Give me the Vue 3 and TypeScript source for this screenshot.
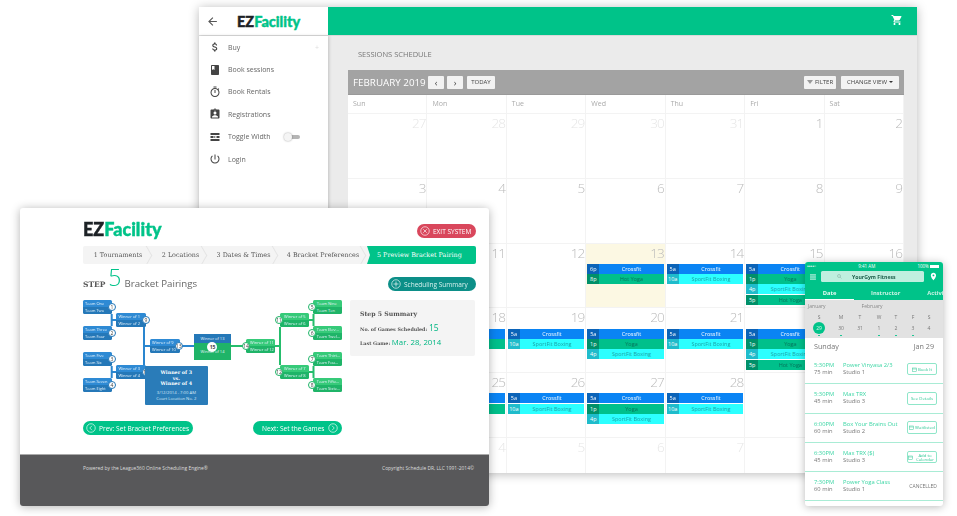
<script setup lang="ts">
type EventKind = 'blue' | 'green' | 'cyan'

interface CalEvent {
  time: string
  label: string
  kind: EventKind
}

interface CalDay {
  num: number
  muted?: boolean
  today?: boolean
  events?: CalEvent[]
}

const crossfit = (time: string): CalEvent => ({ time, label: 'Crossfit', kind: 'blue' })
const boxing = (time: string): CalEvent => ({ time, label: 'SportFit Boxing', kind: 'cyan' })
const yoga = (time: string): CalEvent => ({ time, label: 'Yoga', kind: 'green' })
const hotYoga = (time: string): CalEvent => ({ time, label: 'Hot Yoga', kind: 'green' })

const fullDay = [crossfit('5a'), yoga('1p'), boxing('4p'), hotYoga('5p')]
const shortDay = [crossfit('5a'), boxing('10a')]
const midDay = [crossfit('5a'), yoga('1p'), boxing('4p')]

const weekdays = ['Sun', 'Mon', 'Tue', 'Wed', 'Thu', 'Fri', 'Sat']

const days: CalDay[] = [
  { num: 27, muted: true }, { num: 28, muted: true }, { num: 29, muted: true }, { num: 30, muted: true },
  { num: 31, muted: true }, { num: 1 }, { num: 2 },
  { num: 3 }, { num: 4 }, { num: 5 }, { num: 6 }, { num: 7 }, { num: 8 }, { num: 9 },
  { num: 10 }, { num: 11 }, { num: 12 },
  { num: 13, today: true, events: [crossfit('6p'), hotYoga('8p')] },
  { num: 14, events: shortDay },
  { num: 15, events: fullDay },
  { num: 16 },
  { num: 17 }, { num: 18, events: [crossfit('5a'), yoga('1p')] }, { num: 19, events: shortDay },
  { num: 20, events: midDay }, { num: 21, events: shortDay }, { num: 22, events: fullDay }, { num: 23 },
  { num: 24 }, { num: 25, events: [crossfit('5a'), yoga('1p')] }, { num: 26, events: shortDay },
  { num: 27, events: midDay }, { num: 28, events: shortDay }, { num: 1, muted: true }, { num: 2, muted: true },
  { num: 3, muted: true }, { num: 4, muted: true }, { num: 5, muted: true }, { num: 6, muted: true },
  { num: 7, muted: true }, { num: 8, muted: true }, { num: 9, muted: true },
]

const icons: Record<string, string> = {
  money: 'M11.8 10.9c-2.27-.59-3-1.2-3-2.15 0-1.09 1.01-1.85 2.7-1.85 1.78 0 2.44.85 2.5 2.1h2.21c-.07-1.72-1.12-3.3-3.21-3.81V3h-3v2.16c-1.94.42-3.5 1.68-3.5 3.61 0 2.31 1.91 3.46 4.7 4.13 2.5.6 3 1.48 3 2.41 0 .69-.49 1.79-2.7 1.79-2.06 0-2.87-.92-2.98-2.1h-2.2c.12 2.19 1.76 3.42 3.68 3.83V21h3v-2.15c1.95-.37 3.5-1.5 3.5-3.55 0-2.84-2.43-3.81-4.7-4.4z',
  book: 'M18 2H6c-1.1 0-2 .9-2 2v16c0 1.1.9 2 2 2h12c1.1 0 2-.9 2-2V4c0-1.1-.9-2-2-2zM6 4h5v8l-2.5-1.5L6 12V4z',
  timer: 'M15 1H9v2h6V1zm-4 13h2V8h-2v6zm8.03-6.61l1.42-1.42c-.43-.51-.9-.99-1.41-1.41l-1.42 1.42C16.07 4.74 14.12 4 12 4c-4.97 0-9 4.03-9 9s4.02 9 9 9 9-4.03 9-9c0-2.12-.74-4.07-1.97-5.61zM12 20c-3.87 0-7-3.13-7-7s3.13-7 7-7 7 3.13 7 7-3.13 7-7 7z',
  badge: 'M19 3h-4.18C14.4 1.84 13.3 1 12 1c-1.3 0-2.4.84-2.82 2H5c-1.1 0-2 .9-2 2v14c0 1.1.9 2 2 2h14c1.1 0 2-.9 2-2V5c0-1.1-.9-2-2-2zm-7 0c.55 0 1 .45 1 1s-.45 1-1 1-1-.45-1-1 .45-1 1-1zm0 4c1.66 0 3 1.34 3 3s-1.34 3-3 3-3-1.34-3-3 1.34-3 3-3zm6 12H6v-1.4c0-2 4-3.1 6-3.1s6 1.1 6 3.1V19z',
  width: 'M3 4h18v4H3zM3 16h18v4H3zM3 10h6v4H3zM15 10h6v4h-6zM9.500 12l3-2.500v5z',
  power: 'M13 3h-2v10h2V3zm4.83 2.17l-1.42 1.42C17.99 7.86 19 9.81 19 12c0 3.87-3.13 7-7 7s-7-3.13-7-7c0-2.19 1.01-4.14 2.58-5.42L6.17 5.17C4.23 6.82 3 9.26 3 12c0 4.97 4.03 9 9 9s9-4.03 9-9c0-2.74-1.23-5.18-3.17-6.83z',
}

const menu = [
  { icon: 'money', label: 'Buy', more: true },
  { icon: 'book', label: 'Book sessions' },
  { icon: 'timer', label: 'Book Rentals' },
  { icon: 'badge', label: 'Registrations' },
  { icon: 'width', label: 'Toggle Width', toggle: true },
  { icon: 'power', label: 'Login' },
]

const steps = [
  { label: '1 Tournaments', width: 70 },
  { label: '2 Locations', width: 55 },
  { label: '3 Dates & Times', width: 71 },
  { label: '4 Bracket Preferences', width: 88 },
]

/* ── Bracket, coordinates from the top left of the diagram ── */
interface BracketNode {
  x: number
  y: number
  w: number
  a: string
  b: string
  color: 'blue' | 'green'
  badge: number
  badgeX: number
}

const blueNode = (x: number, y: number, w: number, a: string, b: string, badge: number, badgeX: number): BracketNode =>
  ({ x, y, w, a, b, badge, badgeX, color: 'blue' })
const greenNode = (x: number, y: number, w: number, a: string, b: string, badge: number, badgeX: number): BracketNode =>
  ({ x, y, w, a, b, badge, badgeX, color: 'green' })

const nodes: BracketNode[] = [
  blueNode(0, 0, 29, 'Team One', 'Team Two', 1, 29),
  blueNode(0, 26.4, 29, 'Team Three', 'Team Four', 2, 29),
  blueNode(0, 52, 29, 'Team Five', 'Team Six', 3, 29),
  blueNode(0, 78, 29, 'Team Seven', 'Team Eight', 4, 29),
  blueNode(33.4, 13.4, 29.3, 'Winner of 1', 'Winner of 2', 9, 29.6),
  blueNode(33.4, 65.4, 29.3, 'Winner of 3', 'Winner of 4', 10, 29.6),
  blueNode(67, 39.4, 30, 'Winner of 9', 'Winner of 10', 13, 28.7),
  greenNode(163, 39.4, 28.7, 'Winner of 11', 'Winner of 12', 14, 0),
  greenNode(197, 13.4, 29.3, 'Winner of 5', 'Winner of 6', 11, -1),
  greenNode(197, 65.4, 29.3, 'Winner of 7', 'Winner of 8', 12, -1),
  greenNode(229.7, 0, 29, 'Team Nine', 'Team Ten', 5, -.4),
  greenNode(229.7, 26.4, 29, 'Team Elev...', 'Team Twel...', 6, -.4),
  greenNode(229.7, 52, 29, 'Team Thirt...', 'Team Fou...', 7, -.4),
  greenNode(229.7, 78, 29, 'Team Fifte...', 'Team Sixte...', 8, -.4),
]

/* ── Phone ── */
const phoneDays = [
  { wd: 'S', num: 29, active: true, dot: true },
  { wd: 'M', num: 30, dot: true },
  { wd: 'T', num: 31 },
  { wd: 'W', num: 1, dot: true },
  { wd: 'T', num: 2, dot: true },
  { wd: 'F', num: 3, dot: true },
  { wd: 'S', num: 4 },
]

const classes = [
  { time: '5:30PM', len: '75 min', name: 'Power Vinyasa 2/3', room: 'Studio 1', action: 'Book It', icon: true },
  { time: '5:30PM', len: '45 min', name: 'Max TRX', room: 'Studio 3', action: 'See Details' },
  { time: '6:00PM', len: '60 min', name: 'Box Your Brains Out', room: 'Studio 2', action: 'Waitlisted', icon: true },
  { time: '6:30PM', len: '45 min', name: 'Max TRX ($)', room: 'Studio 3', action: 'Add to Calendar', icon: true },
  { time: '7:30PM', len: '60 min', name: 'Power Yoga Class', room: 'Studio 1', cancelled: true },
]
</script>

<template>
  <div class="scene">
    <!-- back window: sessions calendar -->
    <section class="win-back">
      <div class="side-head">
        <svg class="back-arrow" viewBox="0 0 24 24"><path d="M20 11H7.83l5.59-5.59L12 4l-8 8 8 8 1.41-1.41L7.83 13H20v-2z" /></svg>
        <span class="logo logo-sm"><b>EZ</b><i>Facility</i></span>
      </div>
      <div class="top-bar">
        <svg class="cart" viewBox="0 0 24 24"><path d="M7 18c-1.1 0-1.99.9-1.99 2S5.9 22 7 22s2-.9 2-2-.9-2-2-2zM1 2v2h2l3.6 7.59-1.35 2.45c-.16.28-.25.61-.25.96 0 1.1.9 2 2 2h12v-2H7.42c-.14 0-.25-.11-.25-.25l.03-.12.9-1.63h7.45c.75 0 1.41-.41 1.75-1.03l3.58-6.49c.08-.14.12-.31.12-.48 0-.55-.45-1-1-1H5.21l-.94-2H1zm16 16c-1.1 0-1.99.9-1.99 2s.89 2 1.99 2 2-.9 2-2-.9-2-2-2z" /></svg>
      </div>
      <nav class="side-menu">
        <div v-for="item in menu" :key="item.label" class="menu-item">
          <svg class="menu-icon" viewBox="0 0 24 24"><path :d="icons[item.icon]" /></svg>
          <span>{{ item.label }}</span>
          <span v-if="item.toggle" class="switch"><span class="knob"></span></span>
          <span v-if="item.more" class="more">+</span>
        </div>
      </nav>
      <main class="sessions">
        <h2 class="sessions-title">SESSIONS SCHEDULE</h2>
        <div class="calendar">
          <div class="cal-toolbar">
            <span class="cal-month">FEBRUARY 2019</span>
            <span class="cal-btn cal-arrow">‹</span>
            <span class="cal-btn cal-arrow">›</span>
            <span class="cal-btn cal-today">TODAY</span>
            <span class="cal-spacer"></span>
            <span class="cal-btn cal-filter"><span class="funnel"></span>FILTER</span>
            <span class="cal-btn cal-view">CHANGE VIEW <span class="caret"></span></span>
          </div>
          <div class="cal-grid">
            <div v-for="d in weekdays" :key="d" class="cal-head">{{ d }}</div>
            <div v-for="(day, i) in days" :key="i" class="cal-day" :class="{ today: day.today }">
              <div class="cal-num" :class="{ muted: day.muted }">{{ day.num }}</div>
              <div v-for="ev in day.events" :key="ev.time" class="cal-event" :class="ev.kind">
                <span class="ev-time">{{ ev.time }}</span>
                <span class="ev-label">{{ ev.label }}</span>
              </div>
            </div>
          </div>
        </div>
      </main>
    </section>

    <!-- front window: bracket wizard -->
    <section class="win-front">
      <div class="front-body">
        <header class="front-head">
          <span class="logo logo-lg"><b>EZ</b><i>Facility</i></span>
          <span class="pill pill-exit">
            <svg class="pill-icon" viewBox="0 0 20 20"><circle cx="10" cy="10" r="8.5" /><path d="M6.5 6.5l7 7M13.5 6.5l-7 7" /></svg>
            EXIT SYSTEM
          </span>
        </header>

        <div class="stepper">
          <span v-for="s in steps" :key="s.label" class="step" :style="{ width: s.width + 'px' }">{{ s.label }}</span>
          <span class="step-active">5 Preview Bracket Pairing</span>
        </div>

        <div class="step-row">
          <span class="step-word">STEP</span>
          <span class="step-num">5</span>
          <span class="step-title">Bracket Pairings</span>
          <span class="pill pill-summary">
            <svg class="pill-icon" viewBox="0 0 20 20"><circle cx="10" cy="10" r="8.5" /><path d="M10 5v10M5 10h10" /></svg>
            Scheduling Summary
          </span>
        </div>

        <div class="main-row">
          <div class="bracket">
            <svg class="bracket-lines" viewBox="0 0 259 105">
              <g stroke="#2a86cf" stroke-width="2" fill="none">
                <path d="M28.7 14v12M28.7 66v12M28 20h6M28 72h6M61 27v38M61 46h7M96 46h15" />
              </g>
              <g stroke="#25bd6c" stroke-width="2" fill="none">
                <path d="M148 46h16M191 46h7M197 27v38M226 20h5M226 72h5M230.5 14v12M230.5 66v12" />
              </g>
            </svg>
            <div
              v-for="n in nodes"
              :key="n.badge"
              class="node"
              :class="n.color"
              :style="{ left: n.x + 'px', top: n.y + 'px', width: n.w + 'px' }"
            >
              <span class="node-a">{{ n.a }}</span>
              <span class="node-b">{{ n.b }}</span>
              <span class="node-badge" :style="{ left: n.badgeX + 'px' }">{{ n.badge }}</span>
            </div>
            <div class="final">
              <span class="final-a">Winner of 13</span>
              <span class="final-b">Winner of 14</span>
              <span class="final-badge">15</span>
            </div>
            <div class="popup">
              <strong>Winner of 3<br />vs.<br />Winner of 4</strong>
              <small>3/12/2014 - 7:00 AM<br />Court Location No. 2</small>
            </div>
          </div>

          <aside class="summary">
            <h3>Step 5 Summary</h3>
            <p>No. of Games Scheduled: <em>15</em></p>
            <p>Last Game: <em class="big">Mar. 28, 2014</em></p>
          </aside>
        </div>

        <div class="nav-row">
          <span class="pill pill-nav pill-prev">
            <svg class="pill-icon" viewBox="0 0 20 20"><circle cx="10" cy="10" r="8.5" /><path d="M12 5.5L7.5 10l4.5 4.5" /></svg>
            Prev: Set Bracket Preferences
          </span>
          <span class="pill pill-nav pill-next">
            Next: Set the Games
            <svg class="pill-icon" viewBox="0 0 20 20"><circle cx="10" cy="10" r="8.5" /><path d="M8 5.5l4.5 4.5L8 14.5" /></svg>
          </span>
        </div>
      </div>
      <footer class="front-foot">
        <span>Powered by the League360 Online Scheduling Engine®</span>
        <span>Copyright Schedule DR, LLC 1991-2014©</span>
      </footer>
    </section>

    <!-- phone -->
    <section class="phone">
      <div class="phone-head">
        <div class="status"><span class="signal">●●●●○</span><span>9:41 AM</span><span>100% <i class="battery"></i></span></div>
        <div class="search-row">
          <svg class="burger" viewBox="0 0 10 10"><path d="M0 1.5h10M0 5h10M0 8.500h10" /></svg>
          <div class="search">
            <svg class="lens" viewBox="0 0 10 10"><circle cx="4" cy="4" r="3" /><path d="M6.300 6.300L9 9" /></svg>
            <b>YourGym Fitness</b>
          </div>
          <svg class="pin" viewBox="0 0 24 24"><path d="M12 2C8.130 2 5 5.130 5 9c0 5.250 7 13 7 13s7-7.750 7-13c0-3.870-3.130-7-7-7zm0 9.500a2.500 2.500 0 1 1 0-5 2.500 2.500 0 0 1 0 5z" /></svg>
        </div>
        <div class="tabs">
          <span class="tab tab-on">Date</span>
          <span class="tab tab-mid">Instructor</span>
          <span class="tab tab-end">Activity</span>
        </div>
      </div>
      <div class="phone-cal">
        <div class="months"><span>January</span><span>February</span></div>
        <div class="pc-grid">
          <div v-for="(d, i) in phoneDays" :key="i" class="pc-col">
            <span class="pc-wd">{{ d.wd }}</span>
            <span class="pc-num" :class="{ active: d.active }">{{ d.num }}</span>
            <span class="pc-dot" :class="{ on: d.dot }"></span>
          </div>
        </div>
      </div>
      <div class="day-row"><span>Sunday</span><span>Jan 29</span></div>
      <div v-for="c in classes" :key="c.name" class="class-row">
        <div class="c-time"><span>{{ c.time }}</span><small>{{ c.len }}</small></div>
        <div class="c-name"><span>{{ c.name }}</span><small>{{ c.room }}</small></div>
        <span v-if="c.cancelled" class="c-cancel">CANCELLED</span>
        <span v-else class="c-action">
          <svg v-if="c.icon" class="c-icon" viewBox="0 0 10 10"><rect x="1" y="2" width="8" height="7" /><path d="M1 4h8" /></svg>
          <span>{{ c.action }}</span>
        </span>
      </div>
    </section>
  </div>
</template>

<style scoped>
.scene {
  position: relative;
  width: 957px;
  height: 516px;
  overflow: hidden;
  background: #fff;
  font-family: 'Open Sans', 'Liberation Sans', sans-serif;
}

/* ── Back window ─────────────────────────────── */
.win-back {
  position: absolute;
  left: 199px;
  top: 7px;
  width: 718px;
  height: 466px;
  display: grid;
  grid-template-columns: 129px 1fr;
  grid-template-rows: 29px 1fr;
  background: #ebebeb;
  box-shadow: 0 1px 10px rgba(0, 0, 0, 0.28);
  filter: blur(0.4px);
}

.side-head {
  display: flex;
  align-items: center;
  background: #fff;
  border-bottom: 1px solid #ddd;
  box-sizing: border-box;
}

.back-arrow {
  width: 13px;
  height: 13px;
  margin-left: 7px;
  fill: #555;
}

.logo {
  font-family: 'Lato', sans-serif;
  font-weight: 900;
  white-space: nowrap;
  -webkit-text-stroke: 0.4px currentColor;
}

.logo b {
  color: #1d2226;
}

.logo i {
  font-style: normal;
  color: #00c389;
}

.logo-sm {
  margin-left: 18px;
  font-size: 14.500px;
}

.logo-lg {
  font-size: 18px;
}

.top-bar {
  display: flex;
  align-items: center;
  justify-content: flex-end;
  padding-right: 14px;
  background: #00c389;
  border-bottom: 1px solid #d9d9d9;
  box-sizing: border-box;
}

.cart {
  width: 12px;
  height: 12px;
  margin-top: -2px;
  fill: #fff;
}

.side-menu {
  display: flex;
  flex-direction: column;
  background: #fff;
  box-shadow: 1px 0 3px rgba(0, 0, 0, 0.18);
  z-index: 1;
}

.menu-item {
  display: flex;
  align-items: center;
  height: 22.400px;
  padding-left: 10px;
  color: #666;
  font-size: 7px;
}

.menu-icon {
  width: 12px;
  height: 12px;
  margin-right: 7px;
  fill: #444;
}

.more {
  margin-left: auto;
  margin-right: 9px;
  color: #ddd;
}

.switch {
  position: relative;
  width: 12px;
  height: 4px;
  margin-left: 17px;
  background: #b5b5b5;
  border-radius: 2px;
}

.knob {
  position: absolute;
  left: -4px;
  top: -2px;
  width: 8px;
  height: 8px;
  background: #f5f5f5;
  border-radius: 50%;
  box-shadow: 0 0 2px rgba(0, 0, 0, 0.4);
}

.sessions {
  padding: 0 13px 0 20px;
  overflow: hidden;
}

.sessions-title {
  margin: 13px 0 0 10px;
  height: 21px;
  color: #777;
  font-size: 7.500px;
  font-weight: 400;
  line-height: 10px;
}

.calendar {
  background: #fff;
}

.cal-toolbar {
  display: flex;
  align-items: center;
  height: 25px;
  padding: 0 5px;
  background: #a3a3a3;
  box-sizing: border-box;
  border-bottom: 1px solid #999;
}

.cal-month {
  width: 75px;
  color: #fff;
  font-size: 9.800px;
  white-space: nowrap;
}

.cal-btn {
  display: flex;
  align-items: center;
  justify-content: center;
  height: 13px;
  background: #f2f2f2;
  border-radius: 1px;
  color: #444;
  font-size: 6px;
  white-space: nowrap;
}

.cal-arrow {
  width: 16px;
  margin-right: 3px;
  font-size: 9px;
  line-height: 1;
}

.cal-today {
  width: 28px;
  margin-left: 1px;
}

.cal-spacer {
  flex: 1;
}

.cal-filter {
  width: 32px;
  gap: 2px;
}

.funnel {
  width: 0;
  height: 0;
  border-left: 3px solid transparent;
  border-right: 3px solid transparent;
  border-top: 4px solid #999;
}

.cal-view {
  width: 58px;
  margin-left: 5px;
  gap: 2px;
}

.caret {
  width: 0;
  height: 0;
  border-left: 2px solid transparent;
  border-right: 2px solid transparent;
  border-top: 2px solid #333;
}

.cal-grid {
  display: grid;
  grid-template-columns: repeat(7, 1fr);
  grid-template-rows: 19px repeat(6, 64.800px);
}

.cal-head {
  padding-left: 5px;
  border-right: 1px solid #f3f3f3;
  border-bottom: 1px solid #f3f3f3;
  color: #aaa;
  font-size: 7px;
  line-height: 18px;
}

.cal-day {
  display: flex;
  flex-direction: column;
  gap: 0.300px;
  border-right: 1px solid #f3f3f3;
  border-bottom: 1px solid #f3f3f3;
  overflow: hidden;
}

.cal-day.today {
  background: #fcf8e3;
}

.cal-num {
  height: 20px;
  padding-right: 1px;
  color: #bbb;
  font-size: 13.500px;
  font-weight: 300;
  letter-spacing: -1px;
  line-height: 19px;
  text-align: right;
}

.cal-num.muted {
  color: #e6e6e6;
}

.cal-event {
  display: flex;
  flex: none;
  height: 10px;
  margin: 0 1px;
  font-size: 5.500px;
  line-height: 10px;
  text-align: center;
}

.ev-time {
  width: 12px;
  color: #fff;
}

.ev-label {
  flex: 1;
  overflow: hidden;
  white-space: nowrap;
}

.cal-event.blue {
  background: #0a84f4;
  color: #fff;
}

.cal-event.blue .ev-time {
  background: #0b63b8;
}

.cal-event.green {
  background: #00c08b;
  color: #05745a;
}

.cal-event.green .ev-time {
  background: #009069;
}

.cal-event.cyan {
  background: #2cffff;
  color: #1aa3a8;
}

.cal-event.cyan .ev-time {
  background: #1fbccb;
}

/* ── Front window ────────────────────────────── */
.win-front {
  position: absolute;
  left: 20px;
  top: 208px;
  width: 469px;
  height: 298px;
  display: flex;
  flex-direction: column;
  background: #fff;
  border-radius: 3px;
  box-shadow: 0 1px 10px rgba(0, 0, 0, 0.3);
  overflow: hidden;
  filter: blur(0.3px);
}

.front-body {
  flex: 1;
  padding: 10px 13px 0 63px;
}

.front-head {
  display: flex;
  align-items: center;
  justify-content: space-between;
  height: 22px;
}

.pill {
  display: inline-flex;
  align-items: center;
  height: 14px;
  border-radius: 7px;
  color: #fff;
  font-size: 6.500px;
  white-space: nowrap;
}

.pill-icon {
  flex: none;
  width: 10px;
  height: 10px;
  fill: none;
  stroke: #fff;
  stroke-width: 1.300;
}

.pill-exit {
  width: 59px;
  gap: 3px;
  margin-top: 4px;
  padding-left: 3px;
  box-sizing: border-box;
  background: #d9475c;
}

.stepper {
  display: flex;
  height: 18px;
  margin-top: 6px;
  background: #f4f4f4;
  border-radius: 2px;
  overflow: hidden;
  font-family: 'DejaVu Serif', serif;
  font-size: 6.400px;
  line-height: 18px;
  color: #555;
}

.step {
  position: relative;
  flex: none;
  text-align: center;
  white-space: nowrap;
}

.step::after {
  content: '';
  position: absolute;
  right: 1px;
  top: 3px;
  width: 12px;
  height: 12px;
  border-top: 1px solid #e4e4e4;
  border-right: 1px solid #e4e4e4;
  transform: rotate(45deg) skew(15deg, 15deg);
}

.step-active {
  flex: 1;
  padding-left: 10px;
  background: #00c389;
  color: #fff;
  white-space: nowrap;
  clip-path: polygon(0 0, 100% 0, 100% 100%, 0 100%, 3px 50%);
}

.step-row {
  display: flex;
  align-items: flex-end;
  height: 24px;
  margin-top: 3px;
}

.step-word {
  font-family: 'DejaVu Serif', serif;
  font-size: 7.500px;
  font-weight: 700;
  color: #555;
  line-height: 12px;
}

.step-num {
  margin: 0 3px;
  color: #00c389;
  font-size: 23px;
  font-weight: 300;
  line-height: 27px;
}

.step-title {
  color: #666;
  font-size: 9.700px;
  line-height: 14px;
}

.pill-summary {
  width: 88px;
  gap: 3px;
  margin-left: auto;
  padding-left: 3px;
  box-sizing: border-box;
  background: #0c8f88;
  color: #d8f2ef;
}

.main-row {
  display: flex;
  gap: 8px;
  margin-top: 9px;
}

.bracket {
  position: relative;
  flex: none;
  width: 259px;
  height: 105px;
}

.bracket-lines {
  position: absolute;
  inset: 0;
  width: 259px;
  height: 105px;
}

.node {
  position: absolute;
  display: flex;
  flex-direction: column;
  height: 14px;
  border-radius: 1.500px;
  overflow: visible;
  color: #e6f3fb;
  font-size: 4px;
  line-height: 7px;
}

.node span:not(.node-badge) {
  padding-left: 2px;
  overflow: hidden;
  white-space: nowrap;
}

.node.green span:not(.node-badge) {
  padding-left: 4px;
}

.node.blue .node-a {
  background: #2e8ad4;
  border-radius: 1.500px 1.500px 0 0;
}

.node.blue .node-b {
  background: #2578b8;
  border-radius: 0 0 1.500px 1.500px;
}

.node.green .node-a {
  background: #36ca79;
  border-radius: 1.500px 1.500px 0 0;
}

.node.green .node-b {
  background: #1fb468;
  border-radius: 0 0 1.500px 1.500px;
}

.node-badge {
  position: absolute;
  top: 3px;
  width: 8px;
  height: 8px;
  margin-left: -4px;
  border-radius: 50%;
  background: #fff;
  box-sizing: border-box;
  border: 0.800px solid #2578b8;
  color: #444;
  font-size: 5px;
  line-height: 6.500px;
  text-align: center;
}

.node.green .node-badge {
  border-color: #1fb468;
}

.final {
  position: absolute;
  left: 110.700px;
  top: 34px;
  width: 37.600px;
  height: 25px;
  display: flex;
  flex-direction: column;
  color: #e6f3fb;
  font-size: 4px;
  text-align: center;
}

.final-a {
  flex: 1;
  background: #2578b8;
  line-height: 9px;
}

.final-b {
  flex: 1;
  background: #1fb468;
  line-height: 17px;
}

.final-badge {
  position: absolute;
  left: 13.800px;
  top: 7.500px;
  width: 10px;
  height: 10px;
  border-radius: 50%;
  background: #fff;
  color: #444;
  font-size: 5px;
  font-weight: 700;
  line-height: 10px;
}

.popup {
  position: absolute;
  left: 61.700px;
  top: 65.700px;
  width: 63.300px;
  height: 39.300px;
  display: flex;
  flex-direction: column;
  gap: 3.500px;
  padding-top: 4.500px;
  box-sizing: border-box;
  background: #2a7cb9;
  border-radius: 1px;
  color: #fff;
  text-align: center;
}

.popup strong {
  font-family: 'DejaVu Serif', serif;
  font-size: 4.800px;
  line-height: 5.500px;
}

.popup small {
  font-size: 4.200px;
  line-height: 5.600px;
  color: #d5e8f6;
}

.summary {
  flex: none;
  width: 125px;
  height: 56px;
  padding: 9px 10px;
  box-sizing: border-box;
  background: #f4f4f4;
  border-radius: 2px;
  font-family: 'DejaVu Serif', serif;
  color: #555;
}

.summary h3 {
  margin: 0 0 3px;
  font-size: 6.200px;
  font-weight: 700;
  line-height: 9px;
}

.summary p {
  margin: 0;
  height: 14px;
  font-size: 4.800px;
  font-weight: 700;
  line-height: 14px;
  white-space: nowrap;
}

.summary em {
  font-family: 'Open Sans', sans-serif;
  font-style: normal;
  font-weight: 400;
  font-size: 8.500px;
  color: #00b683;
}

.summary em.big {
  font-size: 7.800px;
}

.nav-row {
  display: flex;
  margin-top: 16px;
}

.pill-nav {
  background: #00c389;
  font-size: 6.600px;
  gap: 3px;
  box-sizing: border-box;
}

.pill-prev {
  width: 110px;
  padding-left: 3px;
}

.pill-next {
  width: 89px;
  margin-left: 60px;
  padding-left: 9px;
}

.front-foot {
  display: flex;
  justify-content: space-between;
  height: 52px;
  padding: 10px 15px 0 63px;
  box-sizing: border-box;
  background: #58585a;
  border-top: 1px solid #aaa;
  color: #ddd;
  font-size: 4.900px;
  line-height: 7px;
}

/* ── Phone ───────────────────────────────────── */
.phone {
  position: absolute;
  left: 805px;
  top: 262px;
  width: 138px;
  height: 244px;
  background: #fff;
  border-radius: 3px;
  box-shadow: 0 1px 8px rgba(0, 0, 0, 0.28);
  overflow: hidden;
  filter: blur(0.4px);
}

.phone-head {
  height: 38px;
  background: #00c389;
  color: #fff;
}

.status {
  display: flex;
  justify-content: space-between;
  height: 9px;
  padding: 0 4px 0 2px;
  font-size: 4.500px;
  line-height: 9px;
}

.signal {
  font-size: 3px;
}

.battery {
  display: inline-block;
  width: 9px;
  height: 3.500px;
  background: #fff;
}

.search-row {
  display: flex;
  align-items: center;
  height: 11px;
  padding: 0 5px;
}

.burger {
  width: 6px;
  height: 6px;
  stroke: #fff;
  fill: none;
  stroke-width: 1.500;
}

.search {
  display: flex;
  align-items: center;
  width: 104px;
  height: 10.500px;
  margin-left: 5px;
  padding-left: 16px;
  box-sizing: border-box;
  background: #bfefdf;
  border-radius: 1.500px;
  color: #1c5e4a;
  font-size: 5.200px;
}

.search b {
  margin-left: 10px;
  font-weight: 700;
}

.lens {
  width: 5px;
  height: 5px;
  fill: none;
  stroke: #7fa89a;
  stroke-width: 1;
}

.pin {
  width: 9px;
  height: 9px;
  margin-left: 5px;
  fill: #fff;
}

.tabs {
  display: flex;
  height: 18px;
  font-size: 5.800px;
  font-weight: 700;
  line-height: 23px;
}

.tab {
  flex: none;
  color: #c8f3e4;
  white-space: nowrap;
}

.tab-on {
  width: 49px;
  height: 18px;
  color: #e6fbf4;
  text-align: center;
  box-sizing: border-box;
  border-bottom: 1px solid #fff;
}

.tab-mid {
  margin-left: 17px;
}

.tab-end {
  margin-left: 27px;
}

.phone-cal {
  height: 38px;
  box-sizing: border-box;
  background: #e2e2e2;
  color: #888;
  padding-top: 3px;
}

.months {
  display: flex;
  gap: 36px;
  padding-left: 3px;
  font-size: 5px;
  line-height: 6px;
}

.pc-grid {
  display: grid;
  grid-template-columns: 28px 16px 22px 16px 18px 16px 16px;
  margin-top: 4.500px;
}

.pc-col {
  display: flex;
  flex-direction: column;
  align-items: center;
  font-size: 5px;
  color: #777;
}

.pc-wd {
  height: 6px;
  line-height: 6px;
}

.pc-num {
  width: 12px;
  height: 12px;
  margin-top: 2px;
  border-radius: 50%;
  line-height: 12px;
  text-align: center;
}

.pc-num.active {
  background: #00c389;
  color: #d9f7ec;
}

.pc-dot {
  width: 1.500px;
  height: 1.500px;
  margin-top: 1px;
  border-radius: 50%;
}

.pc-dot.on {
  background: #00c389;
}

.day-row {
  display: flex;
  justify-content: space-between;
  height: 17px;
  padding: 0 9px;
  color: #777;
  font-size: 7.200px;
  line-height: 17px;
}

.class-row {
  display: flex;
  align-items: center;
  height: 29.300px;
  padding: 0 6px 0 9px;
  box-sizing: border-box;
  border-bottom: 1.200px solid #a9ecd5;
}

.c-time,
.c-name {
  display: flex;
  flex-direction: column;
  font-size: 5.800px;
  line-height: 7px;
  color: #3dd6a5;
  white-space: nowrap;
}

.c-time {
  width: 29px;
}

.c-name {
  flex: 1;
}

.class-row small {
  color: #777;
  font-size: 5.800px;
}

.c-action {
  display: flex;
  align-items: center;
  justify-content: center;
  gap: 1px;
  width: 30px;
  height: 12.500px;
  box-sizing: border-box;
  border: 0.800px solid #8fe6c9;
  border-radius: 2px;
  color: #35c998;
  font-size: 4.300px;
  line-height: 4.500px;
  text-align: center;
}

.c-icon {
  flex: none;
  width: 5px;
  height: 5px;
  fill: none;
  stroke: #35c998;
  stroke-width: 1;
}

.c-cancel {
  color: #777;
  font-size: 5px;
}
</style>
